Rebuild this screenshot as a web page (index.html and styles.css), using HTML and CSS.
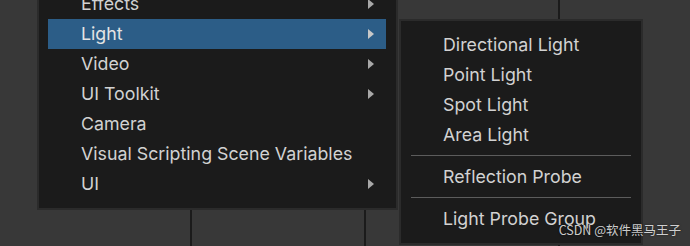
FILE: index.html
```html
<!DOCTYPE html>
<html lang="en">
<head>
    <meta charset="UTF-8">
    <title>GameObject menu</title>
    <link rel="stylesheet" href="styles.css">
</head>
<body>
    <!-- Editor panels behind the menus -->
    <div class="panels">
        <div class="panel panel-a"></div>
        <div class="panel panel-b"></div>
        <div class="panel panel-c"></div>
        <div class="panel panel-d"></div>
    </div>

    <!-- Main context menu -->
    <ul class="menu menu-main">
        <li class="item has-sub">Effects</li>
        <li class="item has-sub active">Light</li>
        <li class="item has-sub">Video</li>
        <li class="item has-sub">UI Toolkit</li>
        <li class="item">Camera</li>
        <li class="item">Visual Scripting Scene Variables</li>
        <li class="item has-sub">UI</li>
    </ul>

    <!-- Light submenu -->
    <ul class="menu menu-sub">
        <li class="item">Directional Light</li>
        <li class="item">Point Light</li>
        <li class="item">Spot Light</li>
        <li class="item">Area Light</li>
        <li class="separator"></li>
        <li class="item">Reflection Probe</li>
        <li class="separator"></li>
        <li class="item">Light Probe Group</li>
    </ul>

    <div class="watermark">CSDN @软件黑马王子</div>
</body>
</html>
```

FILE: styles.css
```css
body {
    margin: 0;
    width: 690px;
    height: 246px;
    overflow: hidden;
    position: relative;
    background-color: #1b1b1b;
    font-family: Inter, "Noto Sans", sans-serif;
}

.panels {
    display: flex;
    gap: 2px;
    height: 100%;
}

.panel {
    background-color: #383838;
}

.panel-a {
    width: 190px;
}

.panel-b {
    width: 172px;
}

.panel-c {
    width: 192px;
}

.panel-d {
    flex: 1;
}

.menu {
    position: absolute;
    margin: 0;
    list-style: none;
    background-color: #1b1b1b;
    border: 2px solid #2b2b2b;
    color: #d2d2d2;
    font-size: 17.8px;
}

.menu-main {
    left: 37px;
    top: -13px;
    width: 338px;
    padding: 0 10px 9px 9px;
}

.menu-sub {
    left: 399px;
    top: 19px;
    width: 220px;
    padding: 9px 10px;
}

.item {
    height: 30px;
    line-height: 30px;
    padding-left: 33px;
    position: relative;
    white-space: nowrap;
}

.menu-sub .item {
    padding-left: 32px;
}

.item.active {
    background-color: #2c5d87;
    color: #e4e4e4;
}

.has-sub::after {
    content: "";
    position: absolute;
    right: 12px;
    top: 10px;
    border-style: solid;
    border-width: 5px 0 5px 6px;
    border-color: transparent transparent transparent #a8a8a8;
}

.has-sub.active::after {
    border-left-color: #c8c8c8;
}

.separator {
    height: 1px;
    margin: 5px 0 6px;
    background-color: #5c5c5c;
}

.watermark {
    position: absolute;
    right: 9px;
    bottom: 7px;
    font-family: "Noto Sans CJK SC", sans-serif;
    font-size: 12.5px;
    color: rgba(255, 255, 255, 0.8);
    text-shadow: 0 0 2px rgba(0, 0, 0, 0.6);
}
```
